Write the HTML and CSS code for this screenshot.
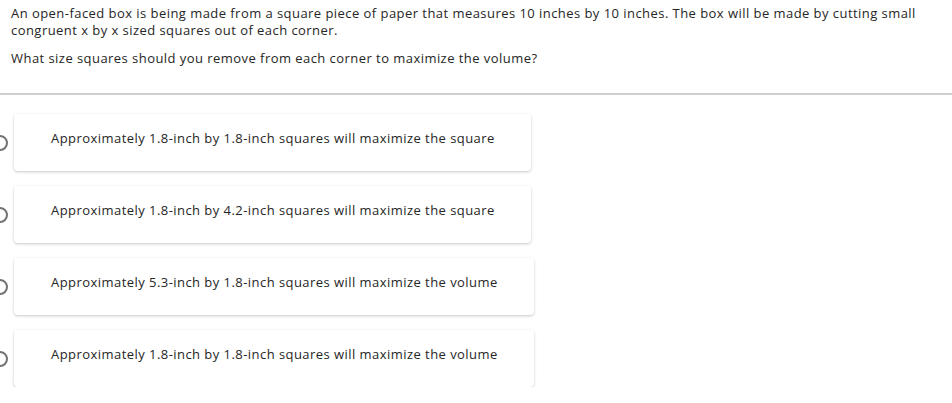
FILE: index.html
```html
<!DOCTYPE html>
<html lang="en">
<head>
    <meta charset="UTF-8">
    <title>Question</title>
    <link rel="stylesheet" href="styles.css">
</head>
<body>
    <div class="pergunta">
        <p>An open-faced box is being made from a square piece of paper that measures 10 inches by 10 inches. The box will be made by cutting small congruent x by x sized squares out of each corner.</p>
        <p>What size squares should you remove from each corner to maximize the volume?</p>
    </div>

    <div class="divisor"></div>

    <div class="opcoes">
        <label class="opcao">
            <span class="radio"></span>
            <span class="cartao">Approximately 1.8-inch by 1.8-inch squares will maximize the square</span>
        </label>
        <label class="opcao">
            <span class="radio"></span>
            <span class="cartao">Approximately 1.8-inch by 4.2-inch squares will maximize the square</span>
        </label>
        <label class="opcao">
            <span class="radio"></span>
            <span class="cartao">Approximately 5.3-inch by 1.8-inch squares will maximize the volume</span>
        </label>
        <label class="opcao">
            <span class="radio"></span>
            <span class="cartao">Approximately 1.8-inch by 1.8-inch squares will maximize the volume</span>
        </label>
    </div>
</body>
</html>
```

FILE: styles.css
```css
body {
    font-family: "Open Sans", sans-serif;
    background-color: #fff;
    color: #262626;
    margin: 0;
    padding: 0;
    font-size: 13px;
    letter-spacing: 0.45px;
    overflow: hidden;
}

.pergunta {
    padding: 5px 11px 0 11px;
    width: 920px;
}

.pergunta p {
    margin: 0 0 11px 0;
    line-height: 17px;
}

.divisor {
    height: 2px;
    background-color: #cfcfcf;
    margin-top: 26px;
}

.opcoes {
    display: flex;
    flex-direction: column;
    gap: 15px;
    padding-top: 19px;
}

.opcao {
    display: flex;
    align-items: center;
    cursor: pointer;
}

.radio {
    width: 12px;
    height: 12px;
    border: 2px solid #727272;
    border-radius: 50%;
    margin-left: -8px;
    flex-shrink: 0;
}

.cartao {
    margin-left: 6px;
    padding: 15px 36px 24px 37px;
    line-height: 18px;
    background-color: #fff;
    border-radius: 4px;
    box-shadow: 0 1px 3px rgba(0, 0, 0, 0.22);
}
```
